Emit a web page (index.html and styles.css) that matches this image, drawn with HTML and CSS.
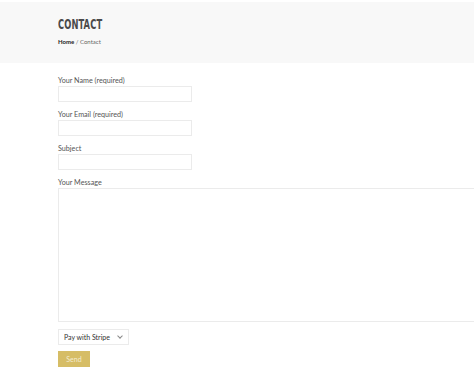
FILE: index.html
```html
<!DOCTYPE html>
<html lang="en">
<head>
    <meta charset="utf-8">
    <title>Contact</title>
    <link rel="stylesheet" href="styles.css">
</head>
<body>
    <header class="titelbar">
        <div class="wrap">
            <h1>CONTACT</h1>
            <p class="crumbs"><a href="#">Home</a> / Contact</p>
        </div>
    </header>

    <form class="kontakt wrap">
        <label>Your Name (required)</label>
        <input type="text" class="felt">
        <label>Your Email (required)</label>
        <input type="text" class="felt">
        <label>Subject</label>
        <input type="text" class="felt">
        <label>Your Message</label>
        <textarea class="besked"></textarea>
        <div class="vaelg">Pay with Stripe <span class="pil"></span></div>
        <button type="button" class="send">Send</button>
    </form>
</body>
</html>
```

FILE: styles.css
```css
* {
    margin: 0;
    padding: 0;
    box-sizing: border-box;
}

body {
    font-family: Lato, "Open Sans", sans-serif;
    color: #444;
    background: #fff;
    overflow: hidden;
}

.wrap {
    padding-left: 58px;
}

/* Titel bar */
.titelbar {
    margin-top: 2px;
    height: 61px;
    background: #f8f8f8;
    padding-top: 11px;
}

h1 {
    display: inline-block;
    font-family: "DejaVu Sans Condensed", sans-serif;
    font-weight: bold;
    font-size: 14px;
    letter-spacing: 0.2px;
    color: #4a4a4a;
    line-height: 14px;
    transform: scaleX(0.66);
    transform-origin: left center;
}

.crumbs {
    margin-top: 6px;
    font-size: 6px;
    color: #666;
}

.crumbs a {
    color: #222;
    text-decoration: none;
    font-weight: bold;
}

/* Formular */
.kontakt {
    display: flex;
    flex-direction: column;
    align-items: flex-start;
    padding-top: 13px;
}

label {
    font-size: 7.2px;
    color: #555;
    line-height: 10px;
}

.felt {
    width: 134px;
    height: 16px;
    border: 1px solid #ebebeb;
    background: #fff;
    margin-bottom: 8px;
}

.besked {
    width: 430px;
    height: 134px;
    border: 1px solid #ebebeb;
    resize: none;
    margin-bottom: 7px;
}

.vaelg {
    display: flex;
    align-items: center;
    gap: 8px;
    height: 16px;
    padding: 0 6px 0 5px;
    border: 1px solid #ebebeb;
    font-size: 7px;
    color: #333;
}

.pil {
    width: 4px;
    height: 4px;
    border-right: 1px solid #888;
    border-bottom: 1px solid #888;
    transform: rotate(45deg);
    margin-top: -3px;
}

.send {
    margin-top: 6px;
    width: 32px;
    height: 16px;
    border: none;
    background: #d6bd66;
    color: #f4ecd0;
    font-family: Lato, sans-serif;
    font-size: 7px;
}
```
